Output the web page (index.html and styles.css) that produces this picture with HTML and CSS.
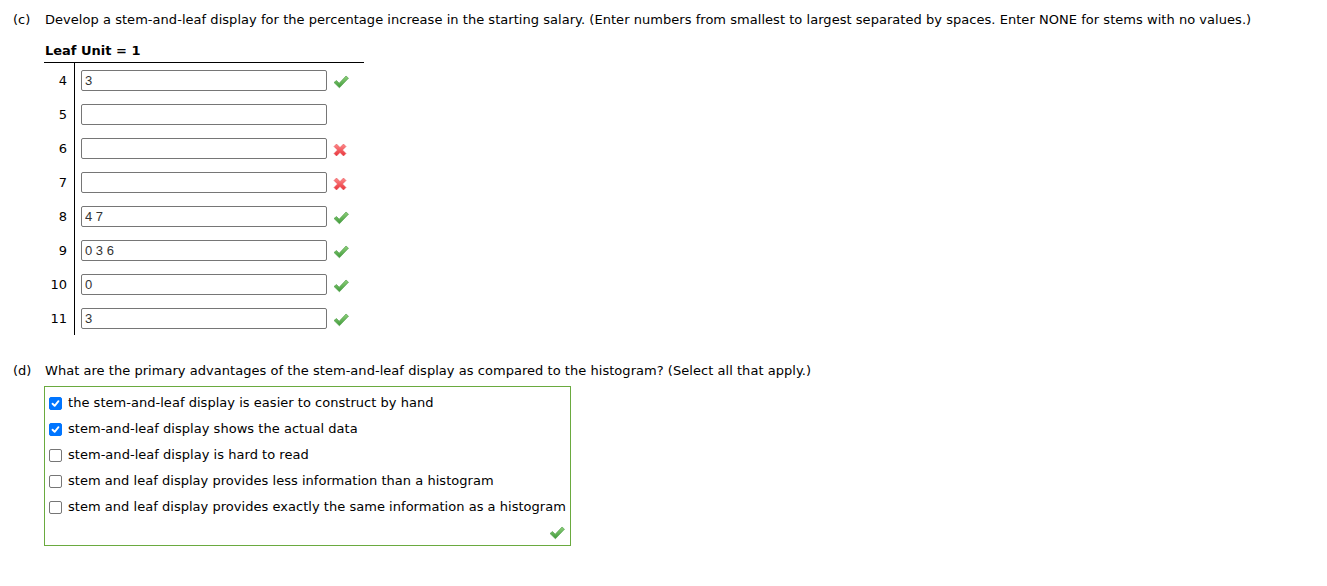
FILE: index.html
```html
<!DOCTYPE html>
<html>
<head>
<meta charset="utf-8">
<link rel="stylesheet" href="styles.css">
</head>
<body>
<svg width="0" height="0" class="defs">
  <defs>
    <linearGradient id="gck" x1="0" y1="0" x2="0" y2="1">
      <stop offset="0" stop-color="#8fd07a"/>
      <stop offset="1" stop-color="#3f9a3a"/>
    </linearGradient>
    <linearGradient id="gx" x1="0" y1="0" x2="0" y2="1">
      <stop offset="0" stop-color="#ff8a8a"/>
      <stop offset="1" stop-color="#e8333a"/>
    </linearGradient>
    <symbol id="ok" viewBox="0 0 16 14">
      <path d="M1 7.5 L3.5 5.5 L6.2 8.2 L13 1 L15.5 3.2 L6.4 12.8 Z" fill="url(#gck)" stroke="#4a9a44" stroke-width="0.6" stroke-linejoin="round"/>
    </symbol>
    <symbol id="bad" viewBox="0 0 14 14">
      <path d="M1 3.5 L3.5 1 L7 4.5 L10.5 1 L13 3.5 L9.5 7 L13 10.5 L10.5 13 L7 9.5 L3.5 13 L1 10.5 L4.5 7 Z" fill="url(#gx)" stroke="#e04a50" stroke-width="0.5" stroke-linejoin="round"/>
    </symbol>
  </defs>
</svg>
<div class="page">
  <div class="part">
    <span class="label">(c)</span>
    <span class="prompt">Develop a stem-and-leaf display for the percentage increase in the starting salary. (Enter numbers from smallest to largest separated by spaces. Enter NONE for stems with no values.)</span>
  </div>
  <div class="sl">
    <div class="unit">Leaf Unit = 1</div>
    <div class="table">
      <div class="row"><div class="stem">4</div><div class="leaf"><input class="inp" value="3"></div><svg class="ico ok"><use href="#ok"/></svg></div>
      <div class="row"><div class="stem">5</div><div class="leaf"><input class="inp" value=""></div></div>
      <div class="row"><div class="stem">6</div><div class="leaf"><input class="inp" value=""></div><svg class="ico bad"><use href="#bad"/></svg></div>
      <div class="row"><div class="stem">7</div><div class="leaf"><input class="inp" value=""></div><svg class="ico bad"><use href="#bad"/></svg></div>
      <div class="row"><div class="stem">8</div><div class="leaf"><input class="inp" value="4 7"></div><svg class="ico ok"><use href="#ok"/></svg></div>
      <div class="row"><div class="stem">9</div><div class="leaf"><input class="inp" value="0 3 6"></div><svg class="ico ok"><use href="#ok"/></svg></div>
      <div class="row"><div class="stem">10</div><div class="leaf"><input class="inp" value="0"></div><svg class="ico ok"><use href="#ok"/></svg></div>
      <div class="row last"><div class="stem">11</div><div class="leaf"><input class="inp" value="3"></div><svg class="ico ok"><use href="#ok"/></svg></div>
    </div>
  </div>
  <div class="part partd">
    <span class="label">(d)</span>
    <span class="prompt">What are the primary advantages of the stem-and-leaf display as compared to the histogram? (Select all that apply.)</span>
  </div>
  <div class="choices">
    <label class="choice"><span class="cb on"><svg viewBox="0 0 13 13"><path d="M3 6.8 L5.5 9.2 L10 3.8" fill="none" stroke="#fff" stroke-width="2.2" stroke-linecap="round" stroke-linejoin="round"/></svg></span>the stem-and-leaf display is easier to construct by hand</label>
    <label class="choice"><span class="cb on"><svg viewBox="0 0 13 13"><path d="M3 6.8 L5.5 9.2 L10 3.8" fill="none" stroke="#fff" stroke-width="2.2" stroke-linecap="round" stroke-linejoin="round"/></svg></span>stem-and-leaf display shows the actual data</label>
    <label class="choice"><span class="cb"></span>stem-and-leaf display is hard to read</label>
    <label class="choice"><span class="cb"></span>stem and leaf display provides less information than a histogram</label>
    <label class="choice"><span class="cb"></span>stem and leaf display provides exactly the same information as a histogram</label>
    <div class="foot"><svg class="ico ok"><use href="#ok"/></svg></div>
  </div>
</div>
</body>
</html>
```

FILE: styles.css
```css
html, body {
  margin: 0;
  padding: 0;
  background: #fff;
}
.defs {
  position: absolute;
  width: 0;
  height: 0;
}
.page {
  font-family: "DejaVu Sans", Verdana, sans-serif;
  font-size: 13px;
  color: #000;
  padding: 11px 0 0 13px;
}
.part {
  display: flex;
  line-height: 18px;
}
.prompt {
  letter-spacing: 0.04px;
}
.label {
  width: 32px;
  flex: none;
}
.sl {
  margin-left: 31px;
  margin-top: 13px;
}
.unit {
  font-weight: bold;
  line-height: 18px;
  padding-left: 1px;
}
.table {
  margin-top: 2px;
  width: 320px;
  border-top: 1px solid #000;
}
.row {
  display: flex;
  align-items: center;
  height: 34px;
}
.stem {
  width: 23px;
  padding-right: 7px;
  text-align: right;
  align-self: stretch;
  display: flex;
  align-items: center;
  justify-content: flex-end;
  padding-top: 1px;
  box-sizing: content-box;
}
.leaf {
  border-left: 1px solid #000;
  align-self: stretch;
  display: flex;
  align-items: center;
  padding-left: 6px;
  padding-top: 1px;
}
.inp {
  width: 246px;
  height: 21px;
  box-sizing: border-box;
  border: 1px solid #767676;
  border-radius: 2px;
  font-family: "Liberation Sans", Arial, sans-serif;
  font-size: 13px;
  color: #333;
  padding: 0 0 0 3px;
  margin: 0;
}
.ico {
  width: 16px;
  height: 14px;
  margin-left: 6px;
  margin-top: 3px;
}
.ico.bad {
  width: 14px;
  height: 14px;
}
.partd {
  margin-top: 27px;
}
.choices {
  margin: 6px 0 0 31px;
  border: 1px solid #6aaa3f;
  padding: 3px 0 0 4px;
  box-sizing: content-box;
  width: 521px;
}
.choice {
  display: flex;
  align-items: center;
  height: 26px;
  line-height: 18px;
  letter-spacing: 0.03px;
}
.cb {
  width: 11px;
  height: 11px;
  border: 1px solid #767676;
  border-radius: 2px;
  margin-right: 6px;
  flex: none;
  display: flex;
}
.cb.on {
  background: #0075ff;
  border-color: #0075ff;
}
.cb svg {
  width: 11px;
  height: 11px;
}
.foot {
  display: flex;
  justify-content: flex-end;
  padding: 6px 5px 5px 0;
}
.foot .ico {
  margin: 0;
}
```
